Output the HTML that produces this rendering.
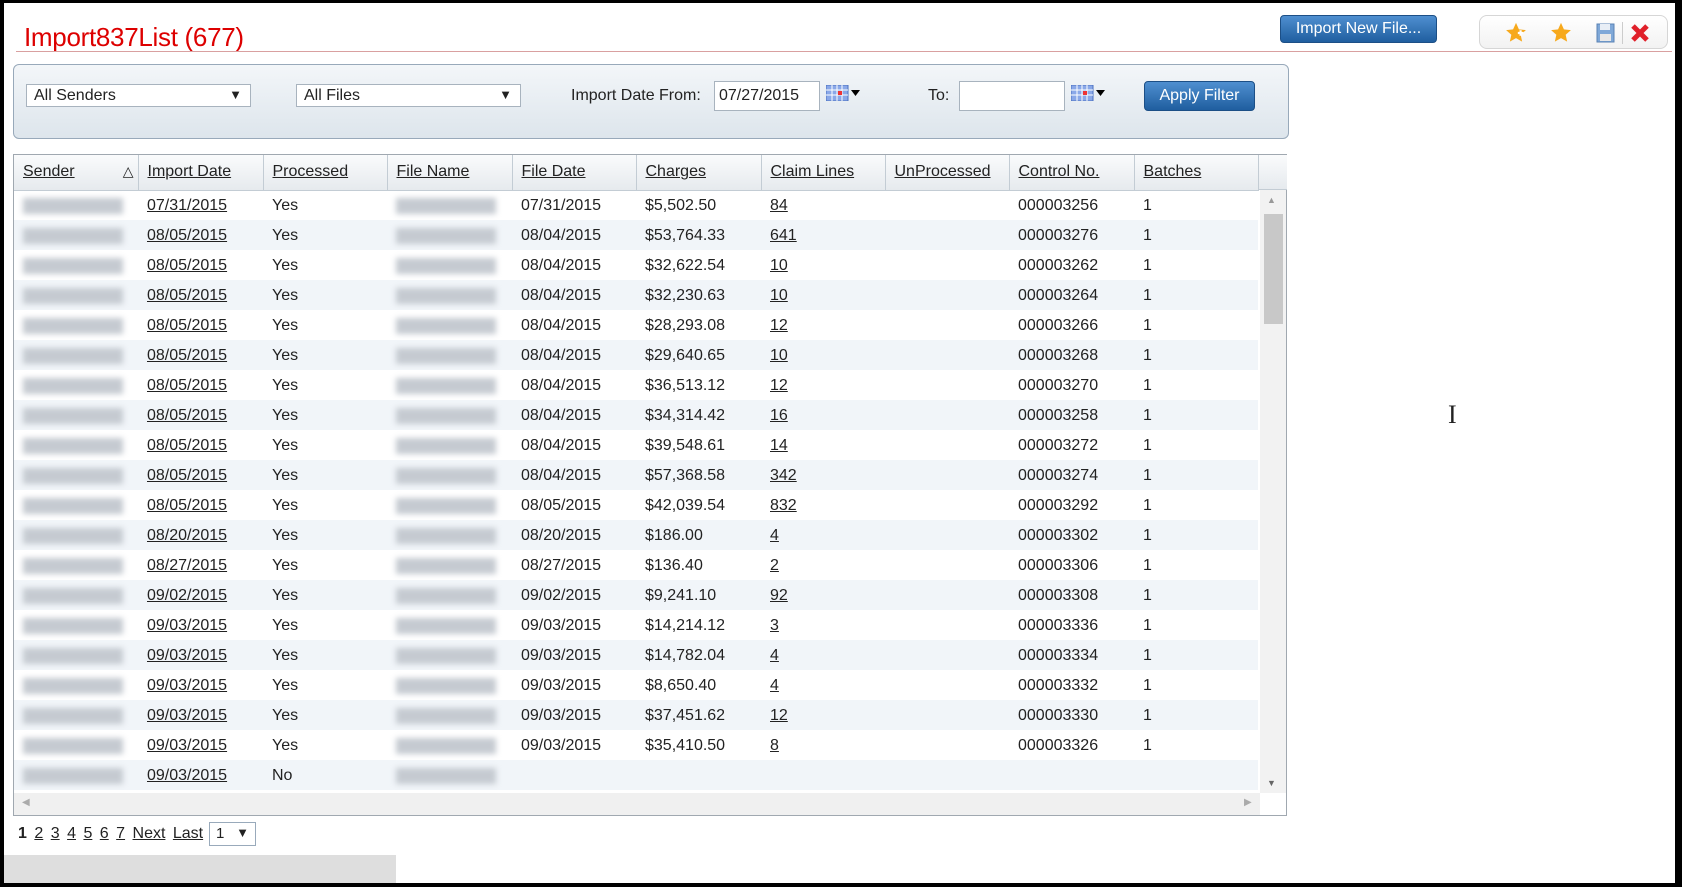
<!DOCTYPE html>
<html><head><meta charset="utf-8"><style>
*{box-sizing:border-box;margin:0;padding:0}
body{width:1682px;height:887px;background:#000;position:relative;overflow:hidden;font-family:"Liberation Sans",sans-serif;color:#222}
#pg{position:absolute;left:4px;top:3px;width:1671px;height:880px;background:#fff;overflow:hidden}
.abs{position:absolute}
.title{left:20px;top:19px;font-size:26px;color:#d00;letter-spacing:-0.3px}
.rline{left:12px;top:48px;width:1656px;height:1px;background:#d9a0a0}
.btn{background:linear-gradient(#4f8fd0,#1f5e9f);border:1px solid #1c4f86;border-radius:4px;color:#fff;font-size:16px;text-align:center}
.tb{left:1475px;top:12px;width:189px;height:34px;border:1px solid #d6d6d6;border-radius:8px;background:linear-gradient(#fff,#f2f2f2)}
.panel{left:9px;top:61px;width:1276px;height:75px;border:1px solid #98a9ba;border-radius:6px;background:linear-gradient(#f3f6f9,#dde5ec)}
.sel{height:23px;border:1px solid #a8b3be;background:#fff;font-size:16px;padding:2px 7px;position:absolute}
.sel b{position:absolute;right:8px;top:2px;font-size:13px}
.inp{height:30px;border:1px solid #a8b3be;background:#fff;font-size:16px;padding:5px 4px;position:absolute}
.lbl{font-size:16px;position:absolute}
.grid{left:9px;top:151px;width:1274px;height:662px;border:1px solid #a0a8b0;background:#fff}
table{border-collapse:collapse;table-layout:fixed;position:absolute;left:0;top:0;width:1244px}
th{height:35px;background:linear-gradient(#fafbfc,#e6eaee);border-right:1px solid #c3ccd4;border-bottom:1px solid #c3ccd4;font-weight:normal;text-align:left;padding-left:9px;font-size:16px;text-decoration:underline}
td{height:30px;padding-left:9px;padding-top:2px;font-size:16px;white-space:nowrap;overflow:hidden}
tr.a td{background:#f1f5f9}
u{text-decoration:underline}
.bl{display:inline-block;height:16px;background:#c5cad1;filter:blur(3px);vertical-align:middle}
.vs{left:1246px;top:35px;width:26px;height:603px;background:#f2f2f2}
.hs{left:0;top:638px;width:1246px;height:22px;background:#f0f0f0}
</style></head><body><div id="pg">
<div class="abs title">Import837List (677)</div>
<div class="abs rline"></div>
<div class="abs btn" style="left:1276px;top:12px;width:157px;height:28px;line-height:26px">Import New File...</div>
<div class="abs tb">
<svg class="abs" style="left:24px;top:6px" width="24" height="22" viewBox="0 0 24 24"><path d="M12 1l3.2 7 7.6.8-5.7 5.1 1.6 7.5L12 17.6 5.3 21.4l1.6-7.5L1.2 8.8 8.8 8z" fill="#f7a91c"/><path d="M14 12h6M17 9v6" stroke="#fff" stroke-width="2.4"/></svg>
<svg class="abs" style="left:69px;top:6px" width="24" height="22" viewBox="0 0 24 24"><path d="M12 1l3.2 7 7.6.8-5.7 5.1 1.6 7.5L12 17.6 5.3 21.4l1.6-7.5L1.2 8.8 8.8 8z" fill="#f7a91c"/></svg>
<svg class="abs" style="left:116px;top:7px" width="19" height="20" viewBox="0 0 19 20"><rect x="1" y="1" width="17" height="18" fill="#7fa8d8" stroke="#5a82b4"/><rect x="4" y="1" width="10" height="6" fill="#e8eef6"/><rect x="4" y="11" width="11" height="7" fill="#e8e8e8"/></svg>
<div class="abs" style="left:142px;top:6px;width:1px;height:22px;background:#ccc"></div>
<svg class="abs" style="left:150px;top:7px" width="20" height="20" viewBox="0 0 20 20"><path d="M3 3L17 17M17 3L3 17" stroke="#e0202a" stroke-width="5"/></svg>
</div>
<div class="abs panel">
<div class="sel" style="left:12px;top:19px;width:225px">All Senders<b>▼</b></div>
<div class="sel" style="left:282px;top:19px;width:225px">All Files<b>▼</b></div>
<div class="lbl" style="left:557px;top:22px">Import Date From:</div>
<div class="inp" style="left:700px;top:16px;width:106px">07/27/2015</div>
<svg class="abs" style="left:812px;top:20px" width="36" height="16"><rect x="0" y="0" width="22" height="16" fill="#8aa8e8" stroke="#4a70c0"/><path d="M0 5h22M0 10h22M6 0v16M11 0v16M16 0v16" stroke="#fff"/><rect x="12" y="6" width="4" height="4" fill="#e33"/><path d="M25 5h9l-4.5 6z" fill="#000"/></svg>
<div class="lbl" style="left:914px;top:22px">To:</div>
<div class="inp" style="left:945px;top:16px;width:106px"></div>
<svg class="abs" style="left:1057px;top:20px" width="36" height="16"><rect x="0" y="0" width="22" height="16" fill="#8aa8e8" stroke="#4a70c0"/><path d="M0 5h22M0 10h22M6 0v16M11 0v16M16 0v16" stroke="#fff"/><rect x="12" y="6" width="4" height="4" fill="#e33"/><path d="M25 5h9l-4.5 6z" fill="#000"/></svg>
<div class="abs btn" style="left:1130px;top:16px;width:111px;height:30px;line-height:28px">Apply Filter</div>
</div>
<div class="abs grid">
<table>
<colgroup><col style="width:124px"><col style="width:125px"><col style="width:124px"><col style="width:125px"><col style="width:124px"><col style="width:125px"><col style="width:124px"><col style="width:124px"><col style="width:125px"><col style="width:124px"></colgroup>
<tr><th style="position:relative">Sender<span style="position:absolute;right:4px;top:8px;text-decoration:none;font-size:14px">△</span></th><th>Import Date</th><th>Processed</th><th>File Name</th><th>File Date</th><th>Charges</th><th>Claim Lines</th><th>UnProcessed</th><th>Control No.</th><th>Batches</th></tr>
<tr><td><span class="bl" style="width:100px"></span></td><td><u>07/31/2015</u></td><td>Yes</td><td><span class="bl" style="width:100px"></span></td><td>07/31/2015</td><td>$5,502.50</td><td><u>84</u></td><td></td><td>000003256</td><td>1</td></tr>
<tr class="a"><td><span class="bl" style="width:100px"></span></td><td><u>08/05/2015</u></td><td>Yes</td><td><span class="bl" style="width:100px"></span></td><td>08/04/2015</td><td>$53,764.33</td><td><u>641</u></td><td></td><td>000003276</td><td>1</td></tr>
<tr><td><span class="bl" style="width:100px"></span></td><td><u>08/05/2015</u></td><td>Yes</td><td><span class="bl" style="width:100px"></span></td><td>08/04/2015</td><td>$32,622.54</td><td><u>10</u></td><td></td><td>000003262</td><td>1</td></tr>
<tr class="a"><td><span class="bl" style="width:100px"></span></td><td><u>08/05/2015</u></td><td>Yes</td><td><span class="bl" style="width:100px"></span></td><td>08/04/2015</td><td>$32,230.63</td><td><u>10</u></td><td></td><td>000003264</td><td>1</td></tr>
<tr><td><span class="bl" style="width:100px"></span></td><td><u>08/05/2015</u></td><td>Yes</td><td><span class="bl" style="width:100px"></span></td><td>08/04/2015</td><td>$28,293.08</td><td><u>12</u></td><td></td><td>000003266</td><td>1</td></tr>
<tr class="a"><td><span class="bl" style="width:100px"></span></td><td><u>08/05/2015</u></td><td>Yes</td><td><span class="bl" style="width:100px"></span></td><td>08/04/2015</td><td>$29,640.65</td><td><u>10</u></td><td></td><td>000003268</td><td>1</td></tr>
<tr><td><span class="bl" style="width:100px"></span></td><td><u>08/05/2015</u></td><td>Yes</td><td><span class="bl" style="width:100px"></span></td><td>08/04/2015</td><td>$36,513.12</td><td><u>12</u></td><td></td><td>000003270</td><td>1</td></tr>
<tr class="a"><td><span class="bl" style="width:100px"></span></td><td><u>08/05/2015</u></td><td>Yes</td><td><span class="bl" style="width:100px"></span></td><td>08/04/2015</td><td>$34,314.42</td><td><u>16</u></td><td></td><td>000003258</td><td>1</td></tr>
<tr><td><span class="bl" style="width:100px"></span></td><td><u>08/05/2015</u></td><td>Yes</td><td><span class="bl" style="width:100px"></span></td><td>08/04/2015</td><td>$39,548.61</td><td><u>14</u></td><td></td><td>000003272</td><td>1</td></tr>
<tr class="a"><td><span class="bl" style="width:100px"></span></td><td><u>08/05/2015</u></td><td>Yes</td><td><span class="bl" style="width:100px"></span></td><td>08/04/2015</td><td>$57,368.58</td><td><u>342</u></td><td></td><td>000003274</td><td>1</td></tr>
<tr><td><span class="bl" style="width:100px"></span></td><td><u>08/05/2015</u></td><td>Yes</td><td><span class="bl" style="width:100px"></span></td><td>08/05/2015</td><td>$42,039.54</td><td><u>832</u></td><td></td><td>000003292</td><td>1</td></tr>
<tr class="a"><td><span class="bl" style="width:100px"></span></td><td><u>08/20/2015</u></td><td>Yes</td><td><span class="bl" style="width:100px"></span></td><td>08/20/2015</td><td>$186.00</td><td><u>4</u></td><td></td><td>000003302</td><td>1</td></tr>
<tr><td><span class="bl" style="width:100px"></span></td><td><u>08/27/2015</u></td><td>Yes</td><td><span class="bl" style="width:100px"></span></td><td>08/27/2015</td><td>$136.40</td><td><u>2</u></td><td></td><td>000003306</td><td>1</td></tr>
<tr class="a"><td><span class="bl" style="width:100px"></span></td><td><u>09/02/2015</u></td><td>Yes</td><td><span class="bl" style="width:100px"></span></td><td>09/02/2015</td><td>$9,241.10</td><td><u>92</u></td><td></td><td>000003308</td><td>1</td></tr>
<tr><td><span class="bl" style="width:100px"></span></td><td><u>09/03/2015</u></td><td>Yes</td><td><span class="bl" style="width:100px"></span></td><td>09/03/2015</td><td>$14,214.12</td><td><u>3</u></td><td></td><td>000003336</td><td>1</td></tr>
<tr class="a"><td><span class="bl" style="width:100px"></span></td><td><u>09/03/2015</u></td><td>Yes</td><td><span class="bl" style="width:100px"></span></td><td>09/03/2015</td><td>$14,782.04</td><td><u>4</u></td><td></td><td>000003334</td><td>1</td></tr>
<tr><td><span class="bl" style="width:100px"></span></td><td><u>09/03/2015</u></td><td>Yes</td><td><span class="bl" style="width:100px"></span></td><td>09/03/2015</td><td>$8,650.40</td><td><u>4</u></td><td></td><td>000003332</td><td>1</td></tr>
<tr class="a"><td><span class="bl" style="width:100px"></span></td><td><u>09/03/2015</u></td><td>Yes</td><td><span class="bl" style="width:100px"></span></td><td>09/03/2015</td><td>$37,451.62</td><td><u>12</u></td><td></td><td>000003330</td><td>1</td></tr>
<tr><td><span class="bl" style="width:100px"></span></td><td><u>09/03/2015</u></td><td>Yes</td><td><span class="bl" style="width:100px"></span></td><td>09/03/2015</td><td>$35,410.50</td><td><u>8</u></td><td></td><td>000003326</td><td>1</td></tr>
<tr class="a"><td><span class="bl" style="width:100px"></span></td><td><u>09/03/2015</u></td><td>No</td><td><span class="bl" style="width:100px"></span></td><td></td><td></td><td></td><td></td><td></td><td></td></tr>
</table>
<div class="abs" style="left:1245px;top:0;width:28px;height:35px;background:linear-gradient(#fafbfc,#e6eaee);border-bottom:1px solid #c3ccd4"></div>
<div class="abs vs"><div class="abs" style="left:7px;top:5px;font-size:9px;color:#999">▲</div><div class="abs" style="left:4px;top:24px;width:19px;height:110px;background:#c8c8c8"></div><div class="abs" style="left:7px;top:588px;font-size:9px;color:#666">▼</div></div>
<div class="abs hs"><div class="abs" style="left:8px;top:4px;font-size:10px;color:#aaa">◀</div><div class="abs" style="left:1230px;top:4px;font-size:10px;color:#aaa">▶</div></div>
</div>
<div class="abs" style="left:14px;top:822px;font-size:16px;word-spacing:3px"><b>1</b> <u>2</u> <u>3</u> <u>4</u> <u>5</u> <u>6</u> <u>7</u> <u>Next</u> <u>Last</u></div>
<div class="abs" style="left:205px;top:819px;width:47px;height:24px;border:1px solid #9ab;font-size:15px;padding:2px 6px">1 <span style="float:right;font-size:13px">▼</span></div>
<div class="abs" style="left:0;top:852px;width:392px;height:30px;background:#dedede"></div>
<div class="abs" style="left:1444px;top:397px;font-size:26px;font-family:'Liberation Serif',serif;color:#222">I</div>
</div></body></html>
